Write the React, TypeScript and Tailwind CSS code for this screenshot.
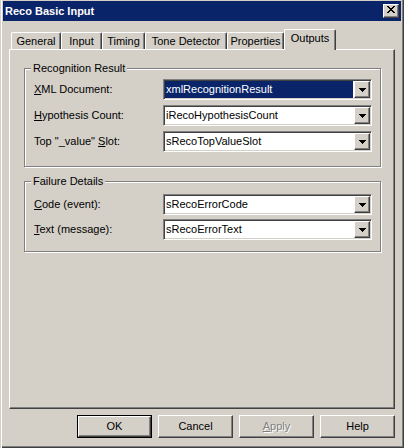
import React from 'react'

const raised =
  'border border-t-white border-l-white border-r-[#404040] border-b-[#404040] shadow-[inset_-1px_-1px_0_#808080]'

const sunken =
  'border border-t-[#808080] border-l-[#808080] border-r-white border-b-white shadow-[inset_1px_1px_0_#404040,inset_-1px_-1px_0_#d4d0c8]'

// pixel patterns for the little glyphs
const closeRows = ['11000011', '01100110', '00111100', '00011000', '00111100', '01100110', '11000011']
const arrowRows = ['1111111', '0111110', '0011100', '0001000']

function PixelGlyph({ rows, color = '#000' }: { rows: string[]; color?: string }) {
  const w = rows[0].length
  const h = rows.length
  return (
    <svg width={w} height={h} viewBox={`0 0 ${w} ${h}`} shapeRendering="crispEdges" className="block">
      {rows.map((row, y) =>
        row.split('').map((c, x) => (c === '1' ? <rect key={`${x}-${y}`} x={x} y={y} width={1} height={1} fill={color} /> : null))
      )}
    </svg>
  )
}

function Combo({ value, selected = false }: { value: string; selected?: boolean }) {
  return (
    <div className={`h-[21px] w-[209px] bg-white flex ${sunken}`}>
      <div className="flex-1 p-[1px] flex">
        <div
          className={`flex-1 flex items-center pl-[1px] leading-[13px] ${
            selected ? 'bg-[#0a246a] text-white' : 'text-black'
          }`}
        >
          {value}
        </div>
      </div>
      <div className={`w-[16px] h-[17px] mt-[1px] mr-[1px] bg-[#d4d0c8] flex items-center justify-center ${raised}`}>
        <PixelGlyph rows={arrowRows} />
      </div>
    </div>
  )
}

function Row({ label, value, selected }: { label: React.ReactNode; value: string; selected?: boolean }) {
  return (
    <div className="flex items-center pl-[9px]">
      <div className="w-[129px] leading-[13px]">{label}</div>
      <Combo value={value} selected={selected} />
    </div>
  )
}

function Group({ title, children, className }: { title: string; children: React.ReactNode; className?: string }) {
  return (
    <div
      className={`ml-[14px] w-[357px] border border-[#808080] shadow-[1px_1px_0_#fff,inset_1px_1px_0_#fff] ${className ?? ''}`}
    >
      <div className="-mt-[7px] ml-[6px] w-fit px-[2px] bg-[#d4d0c8] leading-[13px]">{title}</div>
      {children}
    </div>
  )
}

const tabs = [
  { name: 'General', w: 'w-[50px]' },
  { name: 'Input', w: 'w-[41px]' },
  { name: 'Timing', w: 'w-[43px]' },
  { name: 'Tone Detector', w: 'w-[82px]' },
  { name: 'Properties', w: 'w-[57px]' },
]

function Button({ children, isDefault = false }: { children: React.ReactNode; isDefault?: boolean }) {
  if (isDefault) {
    return (
      <div className="w-[75px] h-[23px] border border-black flex">
        <div className={`flex-1 flex items-center justify-center leading-[13px] ${raised}`}>{children}</div>
      </div>
    )
  }
  return <div className={`w-[75px] h-[23px] flex items-center justify-center leading-[13px] ${raised}`}>{children}</div>
}

export default function App() {
  return (
    <div className="w-[404px] h-[448px] bg-[#d4d0c8] pt-[1px] px-[3px] text-[11px] text-black font-['Liberation_Sans',Arial,sans-serif] shadow-[inset_1px_0_0_#d4d0c8,inset_2px_0_0_#fff,inset_-1px_-1px_0_#404040,inset_-2px_-2px_0_#808080]">
      {/* caption */}
      <div className="h-[20px] bg-[#0a246a] flex items-center justify-between pl-[2px] pr-[2px]">
        <span className="text-white font-bold leading-[13px]">Reco Basic Input</span>
        <div className={`w-[16px] h-[14px] bg-[#d4d0c8] flex items-start pl-[3px] pt-[1px] ${raised}`}>
          <PixelGlyph rows={closeRows} />
        </div>
      </div>

      <div className="mx-[6px]">
        {/* tabs */}
        <div className="mt-[8px] h-[21px] -mb-[1px] pl-[2px] flex items-end relative z-10">
          {tabs.map((t) => (
            <div
              key={t.name}
              className={`${t.w} h-[17px] mb-[1px] pt-[2px] text-center leading-[13px] border-t border-l border-r border-t-white border-l-white border-r-[#404040] shadow-[inset_-1px_0_0_#808080] rounded-t-[2px] whitespace-nowrap`}
            >
              {t.name}
            </div>
          ))}
          <div className="w-[52px] h-[21px] pt-[2px] bg-[#d4d0c8] text-center leading-[13px] border-t border-l border-r border-t-white border-l-white border-r-[#404040] shadow-[inset_-1px_0_0_#808080] rounded-t-[2px]">
            Outputs
          </div>
        </div>

        {/* panel */}
        <div className="h-[360px] border border-t-white border-l-white border-r-[#404040] border-b-[#404040] shadow-[inset_-1px_-1px_0_#808080] pt-[18px]">
          <Group title="Recognition Result">
            <div className="mt-[4px] pb-[14px] flex flex-col gap-[5px]">
              <Row label={<><u>X</u>ML Document:</>} value="xmlRecognitionResult" selected />
              <Row label={<><u>H</u>ypothesis Count:</>} value="iRecoHypothesisCount" />
              <Row label={<>{'Top "_value" '}<u>S</u>lot:</>} value="sRecoTopValueSlot" />
            </div>
          </Group>
          <Group title="Failure Details" className="mt-[14px]">
            <div className="mt-[6px] pb-[11px] flex flex-col gap-[4px]">
              <Row label={<><u>C</u>ode (event):</>} value="sRecoErrorCode" />
              <Row label={<><u>T</u>ext (message):</>} value="sRecoErrorText" />
            </div>
          </Group>
        </div>

        {/* buttons */}
        <div className="mt-[6px] flex justify-end gap-[6px]">
          <Button isDefault>OK</Button>
          <Button>Cancel</Button>
          <Button>
            <span className="text-[#808080] [text-shadow:1px_1px_0_#fff]">
              <u>A</u>pply
            </span>
          </Button>
          <Button>Help</Button>
        </div>
      </div>
    </div>
  )
}
